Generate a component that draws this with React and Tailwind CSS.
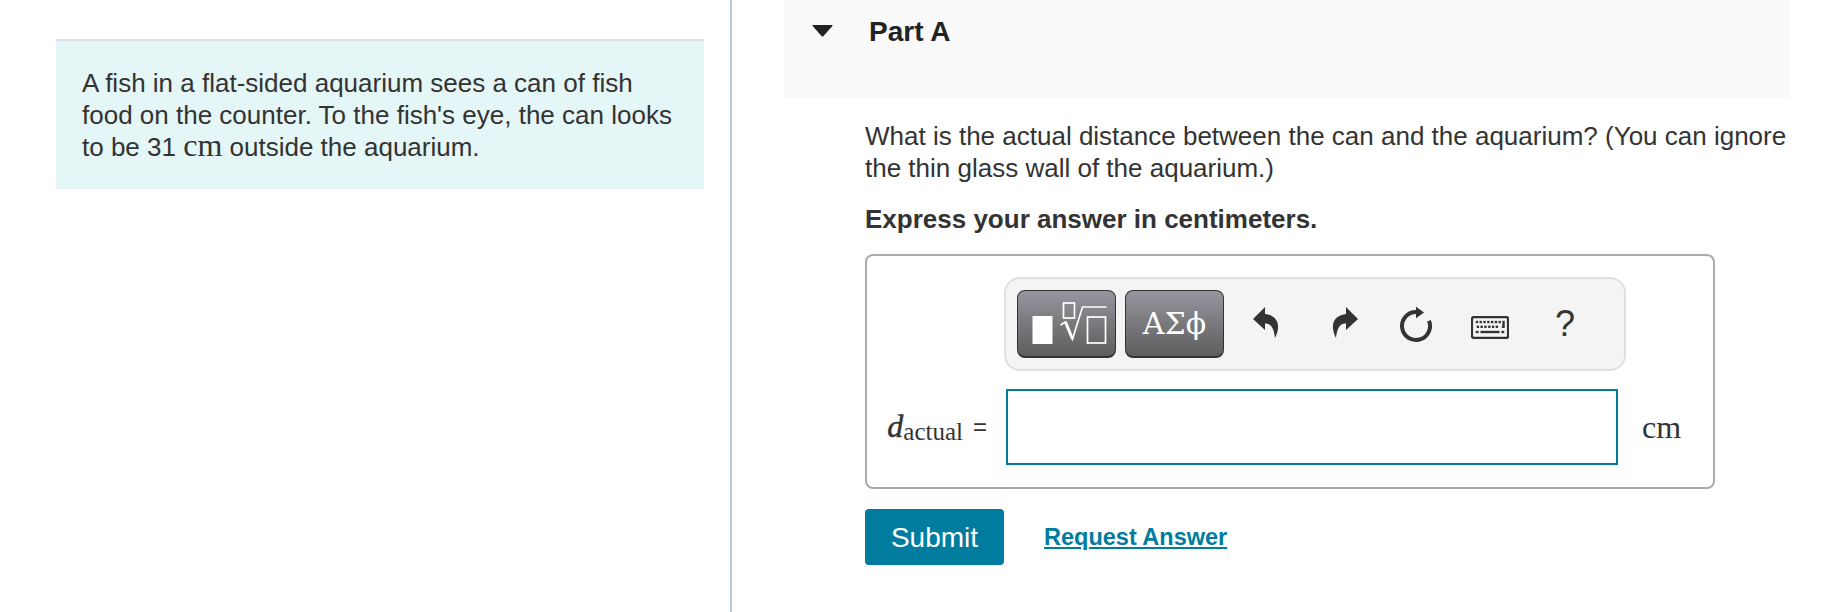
import React from 'react';

function UndoIcon({ flip }) {
  return (
    <svg width="28" height="32" viewBox="0 0 28 32" className={flip ? '-scale-x-100' : ''}>
      <path d="M12 0 L0 12 L12 23 V16.5 C17 16 21 20 22 31 C26 24 29 9 12 7 Z" fill="#333" />
    </svg>
  );
}

function ReloadIcon() {
  return (
    <svg width="32" height="37" viewBox="0 0 32 37">
      <path d="M16 6 A14 14 0 1 0 29 14.8" fill="none" stroke="#333" strokeWidth="4" />
      <path d="M16 0.7 L24 6.5 L16 12.3 Z" fill="#333" />
    </svg>
  );
}

function KeyboardIcon() {
  const top = [5, 9, 13, 17, 21, 25, 29];
  return (
    <svg width="38" height="23" viewBox="0 0 40 24">
      <rect x="1" y="1" width="38" height="22" rx="2" fill="#f4f4f4" stroke="#333" strokeWidth="2.4" />
      {top.map(x => <rect key={x} x={x} y="5" width="2.5" height="2.5" fill="#333" />)}
      {top.slice(0, 6).map(x => <rect key={x} x={x + 1} y="10" width="2.5" height="2.5" fill="#333" />)}
      <path d="M33 5 h2.5 v7.5 h-3 v-2.5 h0.5 z" fill="#333" />
      <rect x="5" y="15.5" width="3" height="2.5" fill="#333" />
      <rect x="10" y="15.5" width="20" height="2.5" fill="#333" />
      <rect x="32" y="15.5" width="3" height="2.5" fill="#333" />
    </svg>
  );
}

function TemplatesIcon() {
  return (
    <svg width="84" height="52" viewBox="0 0 84 52">
      <rect x="7.5" y="18" width="20" height="28" fill="#fff" />
      <rect x="38.5" y="5" width="11" height="15" fill="none" stroke="#fff" strokeWidth="1.7" />
      <path d="M35.5 27 L40.5 24 L47.5 41 L57.5 9 H81.5" fill="none" stroke="#fff" strokeWidth="1.7" />
      <path d="M40.5 24 L47.5 41" fill="none" stroke="#fff" strokeWidth="3" />
      <rect x="62.5" y="19" width="18" height="26" fill="none" stroke="#fff" strokeWidth="1.7" />
    </svg>
  );
}

function ToolbarButton({ children }) {
  return (
    <button className="flex h-[68px] w-[99px] items-center justify-center rounded-lg border border-b-2 border-[#333] bg-gradient-to-b from-[#96969e] to-[#5e5e5e]">
      {children}
    </button>
  );
}

export default function App() {
  return (
    <div className="flex h-[612px] overflow-hidden bg-white font-['Liberation_Sans',Arial,sans-serif] text-[26px] leading-[32px] text-[#333]">
      {/* Passage column */}
      <div className="w-[732px] shrink-0 border-r-2 border-[#b8cbdc] pt-[39px] pl-[56px]">
        <div className="w-[648px] border-t-2 border-[#e0e0e0] bg-[#e5f6f6] px-[26px] py-[26px]">
          A fish in a flat-sided aquarium sees a can of fish food on the counter. To the fish's eye, the can looks to be 31{' '}
          <span className="font-['Liberation_Serif',serif] text-[32px] leading-[0]">cm</span> outside the aquarium.
        </div>
      </div>

      {/* Question column */}
      <div className="min-w-0 flex-1 pl-[52px]">
        <div className="flex h-[98px] w-[1006px] items-start bg-[#f9f9f9] pt-[16px] pl-[28px]">
          <svg width="21" height="12" viewBox="0 0 21 12" className="mt-[9px]">
            <path d="M1 0 H20 Q21 0 20.4 1 L11.5 11 Q10.5 12 9.5 11 L0.6 1 Q0 0 1 0 Z" fill="#222" />
          </svg>
          <span className="ml-[36px] text-[28px] font-bold text-[#222]">Part A</span>
        </div>

        <div className="pl-[81px]">
          <p className="mt-[22px] w-[930px]">
            What is the actual distance between the can and the aquarium? (You can ignore the thin glass wall of the aquarium.)
          </p>
          <p className="mt-[19px] font-bold">Express your answer in centimeters.</p>

          <div className="mt-[19px] h-[235px] w-[850px] rounded-lg border-2 border-[#aaa] pt-[21px]">
            <div className="ml-[137px] flex h-[94px] w-[622px] items-center rounded-2xl border-2 border-[#e0e0e0] bg-[#f4f4f4] pl-[11px]">
              <ToolbarButton><TemplatesIcon /></ToolbarButton>
              <div className="ml-[9px]">
                <ToolbarButton>
                  <span className="font-['DejaVu_Serif',serif] text-[30px] text-white">ΑΣϕ</span>
                </ToolbarButton>
              </div>
              <div className="ml-[29px] flex items-center">
                <div className="mb-[3px]"><UndoIcon /></div>
                <div className="mb-[3px] ml-[49px]"><UndoIcon flip /></div>
                <div className="ml-[42px]"><ReloadIcon /></div>
                <div className="ml-[39px] mt-[6px]"><KeyboardIcon /></div>
                <span className="ml-[46px] text-[36px]">?</span>
              </div>
            </div>

            <div className="mt-[18px] flex items-center">
              <div className="mt-[4px] w-[139px] pr-[19px] text-right font-['Liberation_Serif',serif] whitespace-nowrap">
                <span className="text-[32px] italic [-webkit-text-stroke:0.5px_#333]">d</span>
                <span className="align-[-3px] text-[25px]">actual</span>
                <span className="ml-[10px] align-[2px] font-['Liberation_Sans',sans-serif] text-[24px]">=</span>
              </div>
              <div className="h-[76px] w-[612px] border-2 border-[#007c9e] bg-white" />
              <span className="ml-[24px] font-['Liberation_Serif',serif] text-[32px]">cm</span>
            </div>
          </div>

          <div className="mt-[20px] flex items-center">
            <button className="h-[56px] w-[139px] rounded bg-[#007c9e] pt-[1px] text-[28px] text-white">Submit</button>
            <a className="ml-[40px] text-[23.5px] font-bold text-[#007c9e] underline">Request Answer</a>
          </div>
        </div>
      </div>
    </div>
  );
}
